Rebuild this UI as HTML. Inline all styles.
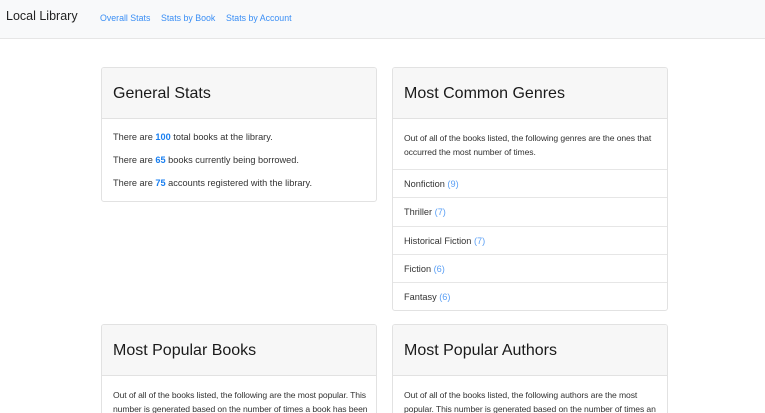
<!DOCTYPE html>
<html><head><meta charset="utf-8"><style>
*{margin:0;padding:0;box-sizing:border-box}
html,body{width:765px;height:413px;overflow:hidden}
body{background:#fff;font-family:"Liberation Sans",sans-serif;color:#212529;position:relative}
.nav{position:absolute;left:0;top:0;width:765px;height:39px;background:#f8f9fa;border-bottom:1px solid #e6e6e6}
.brand{position:absolute;left:6px;top:9px;font-size:12.5px;color:#222}
.nl{position:absolute;top:13px;font-size:8.8px;color:#3b8ff5}
.card{position:absolute;width:276px;border:1px solid #e2e2e2;border-radius:3px;background:#fff;overflow:hidden}
.hd{height:51px;background:#f7f7f7;border-bottom:1px solid #e2e2e2;font-size:16px;padding:17px 0 0 11px;color:#1a1a1a}
.t{position:absolute;left:11px;font-size:9.2px;color:#333;white-space:nowrap}
.t.s{font-size:8.6px;letter-spacing:-0.1px}
.b{color:#1a7ff0;font-weight:bold}
.c{color:#5a9ff5}
.li{position:absolute;left:0;width:276px;border-top:1px solid #e6e6e6;height:29px}
</style></head><body>
<div class="nav">
<div class="brand">Local Library</div>
<div class="nl" style="left:100px">Overall Stats</div>
<div class="nl" style="left:161px">Stats by Book</div>
<div class="nl" style="left:226px">Stats by Account</div>
</div>

<div class="card" style="left:101px;top:67px;height:135px">
<div class="hd">General Stats</div>
<div class="t" style="top:64px">There are <span class="b">100</span> total books at the library.</div>
<div class="t" style="top:87px">There are <span class="b">65</span> books currently being borrowed.</div>
<div class="t" style="top:110px">There are <span class="b">75</span> accounts registered with the library.</div>
</div>

<div class="card" style="left:392px;top:67px;height:244px">
<div class="hd">Most Common Genres</div>
<div class="t s" style="top:63px;line-height:14px">Out of all of the books listed, the following genres are the ones that<br>occurred the most number of times.</div>
<div class="li" style="top:101px"></div><div class="t" style="top:111px">Nonfiction <span class="c">(9)</span></div>
<div class="li" style="top:129px"></div><div class="t" style="top:139px">Thriller <span class="c">(7)</span></div>
<div class="li" style="top:158px"></div><div class="t" style="top:168px">Historical Fiction <span class="c">(7)</span></div>
<div class="li" style="top:186px"></div><div class="t" style="top:196px">Fiction <span class="c">(6)</span></div>
<div class="li" style="top:214px"></div><div class="t" style="top:224px">Fantasy <span class="c">(6)</span></div>
</div>

<div class="card" style="left:101px;top:324px;height:89px;border-bottom:none;border-radius:3px 3px 0 0">
<div class="hd">Most Popular Books</div>
<div class="t s" style="top:63px;line-height:14px">Out of all of the books listed, the following are the most popular. This<br>number is generated based on the number of times a book has been</div>
</div>

<div class="card" style="left:392px;top:324px;height:89px;border-bottom:none;border-radius:3px 3px 0 0">
<div class="hd">Most Popular Authors</div>
<div class="t s" style="top:63px;line-height:14px">Out of all of the books listed, the following authors are the most<br>popular. This number is generated based on the number of times an</div>
</div>
</body></html>
